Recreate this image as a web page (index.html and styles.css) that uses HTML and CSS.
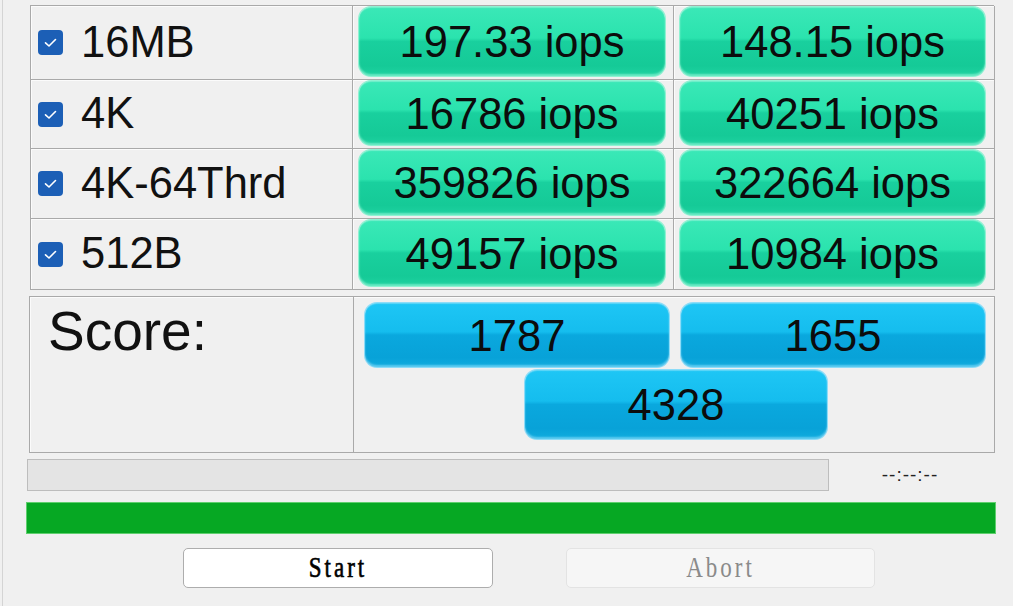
FILE: index.html
```html
<!DOCTYPE html>
<html>
<head>
<meta charset="utf-8">
<link rel="stylesheet" href="styles.css">
</head>
<body>
<div class="window">
  <div class="results">
    <div class="cell label-cell r1">
      <span class="check"><svg viewBox="0 0 25 25" width="25" height="25"><rect x="0" y="0" width="25" height="25" rx="4" fill="#1c5fb6"/><path d="M7.5 12.8 L11 16 L17.5 9.5" fill="none" stroke="#fff" stroke-width="1.6" stroke-linecap="round" stroke-linejoin="round"/></svg></span>
      <span class="label">16MB</span>
    </div>
    <div class="cell val-cell r1"><div class="pill green">197.33 iops</div></div>
    <div class="cell val-cell col3 r1"><div class="pill green">148.15 iops</div></div>

    <div class="cell label-cell">
      <span class="check"><svg viewBox="0 0 25 25" width="25" height="25"><rect x="0" y="0" width="25" height="25" rx="4" fill="#1c5fb6"/><path d="M7.5 12.8 L11 16 L17.5 9.5" fill="none" stroke="#fff" stroke-width="1.6" stroke-linecap="round" stroke-linejoin="round"/></svg></span>
      <span class="label">4K</span>
    </div>
    <div class="cell val-cell"><div class="pill green">16786 iops</div></div>
    <div class="cell val-cell col3"><div class="pill green">40251 iops</div></div>

    <div class="cell label-cell">
      <span class="check"><svg viewBox="0 0 25 25" width="25" height="25"><rect x="0" y="0" width="25" height="25" rx="4" fill="#1c5fb6"/><path d="M7.5 12.8 L11 16 L17.5 9.5" fill="none" stroke="#fff" stroke-width="1.6" stroke-linecap="round" stroke-linejoin="round"/></svg></span>
      <span class="label">4K-64Thrd</span>
    </div>
    <div class="cell val-cell"><div class="pill green">359826 iops</div></div>
    <div class="cell val-cell col3"><div class="pill green">322664 iops</div></div>

    <div class="cell label-cell">
      <span class="check"><svg viewBox="0 0 25 25" width="25" height="25"><rect x="0" y="0" width="25" height="25" rx="4" fill="#1c5fb6"/><path d="M7.5 12.8 L11 16 L17.5 9.5" fill="none" stroke="#fff" stroke-width="1.6" stroke-linecap="round" stroke-linejoin="round"/></svg></span>
      <span class="label">512B</span>
    </div>
    <div class="cell val-cell"><div class="pill green">49157 iops</div></div>
    <div class="cell val-cell col3"><div class="pill green">10984 iops</div></div>
  </div>

  <div class="score-box">
    <div class="score-label">Score:</div>
    <div class="score-values">
      <div class="score-row">
        <div class="pill blue score-pill">1787</div>
        <div class="pill blue score-pill">1655</div>
      </div>
      <div class="score-row center">
        <div class="pill blue total-pill">4328</div>
      </div>
    </div>
  </div>

  <div class="progress-row">
    <div class="progress"></div>
    <div class="time">--:--:--</div>
  </div>

  <div class="green-bar"></div>

  <div class="buttons">
    <div class="btn start"><span>Start</span></div>
    <div class="btn abort"><span>Abort</span></div>
  </div>
</div>
</body>
</html>
```

FILE: styles.css
```css
html, body {
  margin: 0;
  padding: 0;
}
body {
  width: 1013px;
  height: 606px;
  overflow: hidden;
  background: #f0f0f0;
  font-family: "Liberation Sans", Arial, sans-serif;
  color: #111;
}
.window {
  width: 1013px;
  height: 606px;
  box-sizing: border-box;
  border-left: 1px solid #d4d4d4;
  margin-left: 2px;
  padding-top: 5px;
}
.results {
  margin-left: 27px;
  width: 964px;
  display: grid;
  grid-template-columns: 322px 321px 321px;
  grid-template-rows: 74px 69px 70px 71px;
  border-top: 1px solid #a9a9a9;
  border-left: 1px solid #a9a9a9;
  box-sizing: border-box;
}
.cell {
  border-right: 1px solid #a9a9a9;
  border-bottom: 1px solid #a9a9a9;
  box-shadow: inset 1px 1px 0 #fbfbfb;
  box-sizing: border-box;
  display: flex;
  align-items: center;
}
.label-cell {
  padding-left: 7px;
  gap: 18px;
}
.check {
  display: flex;
  width: 25px;
  height: 25px;
}
.label {
  font-size: 43.5px;
  line-height: 1;
}
.val-cell {
  padding: 1px 8px 3px 6px;
  align-items: stretch;
}
.col3 {
  padding-left: 6px;
  padding-right: 9px;
}
.pill {
  flex: 1;
  border-radius: 12px;
  display: flex;
  align-items: center;
  justify-content: center;
  font-size: 43.5px;
  line-height: 1;
  color: #0c0c0c;
  padding-top: 3px;
  box-sizing: border-box;
}
.green {
  background: linear-gradient(to bottom, #3ae8b7 0%, #2be3ae 45%, #19d09e 50%, #15ca97 85%, #1ed2a1 100%);
  box-shadow: 0 0 0 1px #8ff2d2, inset 0 -2px 2px rgba(170, 255, 225, 0.55), inset 0 1px 1px rgba(255, 255, 255, 0.3);
}
.blue {
  background: linear-gradient(to bottom, #1ec6f5 0%, #15bdee 45%, #0aa8de 50%, #08a2d8 85%, #10acdf 100%);
  box-shadow: 0 0 0 1px #8ddcf8, inset 0 -2px 2px rgba(160, 230, 255, 0.55), inset 0 1px 1px rgba(255, 255, 255, 0.3);
}
.score-box {
  margin-top: 6px;
  margin-left: 26px;
  width: 966px;
  height: 157px;
  box-sizing: border-box;
  border: 1px solid #a9a9a9;
  box-shadow: inset 1px 1px 0 #fbfbfb;
  display: flex;
}
.score-label {
  width: 324px;
  box-sizing: border-box;
  border-right: 1px solid #a9a9a9;
  font-size: 55px;
  line-height: 1;
  padding-top: 7px;
  padding-left: 18px;
}
.score-values {
  flex: 1;
  padding: 6px 9px 0 11px;
  display: flex;
  flex-direction: column;
  gap: 3px;
}
.score-row {
  display: flex;
  gap: 12px;
}
.score-row.center {
  justify-content: center;
}
.score-pill {
  height: 64px;
}
.total-pill {
  flex: 0 0 302px;
  height: 69px;
  margin-left: 2px;
}
.progress-row {
  margin-top: 6px;
  margin-left: 24px;
  width: 968px;
  display: flex;
  align-items: center;
}
.progress {
  width: 802px;
  height: 32px;
  box-sizing: border-box;
  background: #e4e4e4;
  border: 1px solid #bdbdbd;
}
.time {
  flex: 1;
  text-align: center;
  font-size: 19px;
  letter-spacing: 1px;
  color: #222;
  padding-right: 4px;
}
.green-bar {
  margin-top: 12px;
  margin-left: 24px;
  width: 968px;
  height: 30px;
  background: #06a823;
  box-shadow: 0 0 0 1px #5fcf6e;
}
.buttons {
  margin-top: 15px;
  margin-left: 180px;
  display: flex;
  gap: 73px;
}
.btn {
  width: 310px;
  height: 40px;
  box-sizing: border-box;
  border-radius: 5px;
  display: flex;
  align-items: center;
  justify-content: center;
  font-family: "Liberation Serif", "Times New Roman", serif;
  font-size: 23px;
  letter-spacing: 3px;
}
.btn span {
  display: inline-block;
  transform: scaleY(1.3);
}
.start {
  background: #ffffff;
  border: 1px solid #adadad;
  color: #000;
  -webkit-text-stroke: 0.5px #000;
}
.abort {
  width: 309px;
  background: #f6f6f6;
  border: 1px solid #e3e3e3;
  color: #8a8a8a;
}
```
